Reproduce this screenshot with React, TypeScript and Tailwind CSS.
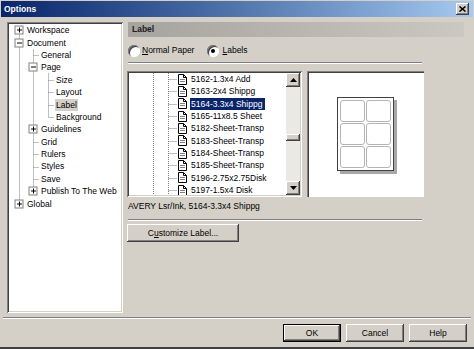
import React from "react";

const font = { fontFamily: '"Liberation Sans", Arial, sans-serif' };

interface TreeItem {
  label: string;
  level: number;
  exp?: "+" | "-";
  selected?: boolean;
}

const tree: TreeItem[] = [
  { label: "Workspace", level: 0, exp: "+" },
  { label: "Document", level: 0, exp: "-" },
  { label: "General", level: 1 },
  { label: "Page", level: 1, exp: "-" },
  { label: "Size", level: 2 },
  { label: "Layout", level: 2 },
  { label: "Label", level: 2, selected: true },
  { label: "Background", level: 2 },
  { label: "Guidelines", level: 1, exp: "+" },
  { label: "Grid", level: 1 },
  { label: "Rulers", level: 1 },
  { label: "Styles", level: 1 },
  { label: "Save", level: 1 },
  { label: "Publish To The Web", level: 1, exp: "+" },
  { label: "Global", level: 0, exp: "+" },
];

const labels = [
  "5162-1.3x4 Add",
  "5163-2x4 Shippg",
  "5164-3.3x4 Shippg",
  "5165-11x8.5 Sheet",
  "5182-Sheet-Transp",
  "5183-Sheet-Transp",
  "5184-Sheet-Transp",
  "5185-Sheet-Transp",
  "5196-2.75x2.75Disk",
  "5197-1.5x4 Disk",
];

const levelPad = ["pl-[18px]", "pl-[32px]", "pl-[47px]"];
const levelX = [10.5, 24.5, 39.5];

const raised =
  "bg-[#d4d0c8] shadow-[inset_-1px_-1px_#404040,inset_1px_1px_#ffffff,inset_-2px_-2px_#808080,inset_2px_2px_#d4d0c8]";
const sunken =
  "shadow-[inset_1px_1px_#808080,inset_-1px_-1px_#ffffff,inset_2px_2px_#404040,inset_-2px_-2px_#d4d0c8]";

const Expander = ({ x, y, sign }: { x: number; y: number; sign: "+" | "-" }) => (
  <g>
    <rect x={x - 4} y={y - 4} width={8} height={8} fill="#fff" stroke="#808080" />
    <line x1={x - 2} y1={y} x2={x + 3} y2={y} stroke="#000" />
    {sign === "+" && <line x1={x + 0.5} y1={y - 2.5} x2={x + 0.5} y2={y + 2.5} stroke="#000" />}
  </g>
);

const TreeLines = () => {
  const c = (i: number) => Math.round(6.2 + 12.4 * i) + 0.5;
  const dash = { stroke: "#808080", strokeDasharray: "1 1" };
  return (
    <svg className="absolute left-0 top-0 pointer-events-none" width={112} height={287}>
      <line x1={10.5} y1={c(0)} x2={10.5} y2={c(14)} {...dash} />
      <line x1={24.5} y1={c(1) + 6} x2={24.5} y2={c(13)} {...dash} />
      <line x1={39.5} y1={c(3) + 6} x2={39.5} y2={c(7)} {...dash} />
      {tree.map((t, i) =>
        t.level > 0 && !t.exp ? (
          <line key={i} x1={levelX[t.level]} y1={c(i)} x2={levelX[t.level] + 6} y2={c(i)} {...dash} />
        ) : null
      )}
      {tree.map((t, i) =>
        t.exp ? <Expander key={"e" + i} x={levelX[t.level] - 0.5} y={c(i) - 0.5} sign={t.exp} /> : null
      )}
    </svg>
  );
};

const ListLines = () => {
  const c = (i: number) => Math.round(6 + 12.33 * i) + 0.5;
  const dash = { stroke: "#808080", strokeDasharray: "1 1" };
  return (
    <svg className="absolute left-0 top-0 pointer-events-none" width={157} height={122}>
      <line x1={24.5} y1={0} x2={24.5} y2={122} {...dash} />
      <line x1={39.5} y1={0} x2={39.5} y2={122} {...dash} />
      {labels.map((_, i) => (
        <line key={i} x1={39.5} y1={c(i)} x2={48} y2={c(i)} {...dash} />
      ))}
    </svg>
  );
};

const PageIcon = () => (
  <svg width="9" height="11" viewBox="0 0 9 11" className="shrink-0">
    <path d="M0.5 0.5 H5.5 L8.5 3.5 V10.5 H0.5 Z" fill="#fff" stroke="#000" />
    <path d="M5.5 0.5 V3.5 H8.5" fill="none" stroke="#000" />
    <line x1="2" y1="5.5" x2="7" y2="5.5" stroke="#808080" />
    <line x1="2" y1="7.5" x2="7" y2="7.5" stroke="#808080" />
  </svg>
);

const Arrow = ({ up }: { up?: boolean }) => (
  <svg width="7" height="4" viewBox="0 0 7 4">
    <path d={up ? "M0 4 L3.5 0 L7 4 Z" : "M0 0 L3.5 4 L7 0 Z"} fill="#000" />
  </svg>
);

const Radio = ({ checked }: { checked?: boolean }) => (
  <span className="w-[12px] h-[12px] rounded-full bg-white flex items-center justify-center shrink-0 shadow-[inset_1px_1px_#808080,inset_-1px_-1px_#ffffff,inset_2px_2px_#404040]">
    {checked && <span className="w-[4px] h-[4px] rounded-full bg-black" />}
  </span>
);

const Button = ({ children, def }: { children: React.ReactNode; def?: boolean }) => (
  <div className={def ? "border border-black" : ""}>
    <div
      className={
        raised +
        " flex items-center justify-center text-[8.5px] text-black " +
        (def ? "w-[56px] h-[16px]" : "w-[58px] h-[18px]")
      }
    >
      {children}
    </div>
  </div>
);

const Separator = ({ w }: { w: string }) => (
  <div className={w + " h-[2px] border-t border-t-[#808080] border-b border-b-white"} />
);

export default function App() {
  return (
    <div
      className="relative w-[474px] h-[349px] bg-[#d4d0c8] border-b-[2px] border-b-[#404040] overflow-hidden text-black"
      style={font}
    >
      {/* Title bar */}
      <div className="mx-[1px] mt-[1px] h-[16px] flex items-center justify-between bg-gradient-to-r from-[#0a246a] to-[#a6caf0] pl-[3px] pr-[4px]">
        <span className="text-white font-bold text-[8.5px] leading-none">Options</span>
        <div className={raised + " w-[13px] h-[12px] flex items-center justify-center"}>
          <svg width="7" height="6" viewBox="0 0 7 6">
            <path d="M0.5 0.5 L6.5 5.5 M6.5 0.5 L0.5 5.5" stroke="#000" strokeWidth="1.6" />
          </svg>
        </div>
      </div>

      {/* Body */}
      <div className="flex pl-[7px] pt-[5px] gap-[5px]">
        {/* Tree */}
        <div className={"w-[116px] h-[291px] bg-white p-[2px] " + sunken}>
          <div className="relative w-full h-full">
            <TreeLines />
            <div className="relative">
              {tree.map((t) => (
                <div key={t.label} className={"h-[12.4px] flex items-center text-[8.5px] " + levelPad[t.level]}>
                  <span
                    className={
                      "leading-[12px] whitespace-nowrap " + (t.selected ? "bg-[#d4d0c8] px-[1px] -ml-[1px]" : "")
                    }
                  >
                    {t.label}
                  </span>
                </div>
              ))}
            </div>
          </div>
        </div>

        {/* Right panel */}
        <div className="w-[336px] flex flex-col">
          <div className="h-[15px] bg-gradient-to-r from-[#a6a49e] to-[#cbc8c1] flex items-center pl-[4px]">
            <span className="text-[8.5px] font-bold text-[#202020]">Label</span>
          </div>

          <div className="mt-[7px] h-[13px] flex items-center text-[8.5px]">
            <Radio />
            <span className="ml-[2px]">
              <span className="underline">N</span>ormal Paper
            </span>
            <span className="ml-[13px] flex items-center">
              <Radio checked />
              <span className="ml-[3px]">
                <span className="underline">L</span>abels
              </span>
            </span>
          </div>

          <div className="mt-[5px]">
            <Separator w="w-[294px]" />
          </div>

          <div className="mt-[7px] flex gap-[5px] -ml-[1px]">
            {/* Label list */}
            <div className={"w-[175px] h-[126px] bg-white p-[2px] flex " + sunken}>
              <div className="relative flex-1 overflow-hidden">
                <ListLines />
                <div className="relative">
                  {labels.map((l, i) => (
                    <div key={l} className="h-[12.33px] flex items-center pl-[49px] gap-[4px] text-[8.5px]">
                      <PageIcon />
                      <span
                        className={
                          "leading-[12px] whitespace-nowrap -ml-[1px] px-[1px] " +
                          (i === 2 ? "bg-[#0a246a] text-white pr-[3px]" : "")
                        }
                      >
                        {l}
                      </span>
                    </div>
                  ))}
                </div>
              </div>
              <div className="w-[14px] h-full flex flex-col bg-[#ebe9e4]">
                <div className={raised + " h-[14px] flex items-center justify-center"}>
                  <Arrow up />
                </div>
                <div className={raised + " mt-[47px] h-[7px]"} />
                <div className="flex-1" />
                <div className={raised + " h-[14px] flex items-center justify-center"}>
                  <Arrow />
                </div>
              </div>
            </div>

            {/* Preview */}
            <div className="w-[117px] h-[126px] bg-white flex items-center justify-center shadow-[inset_1px_1px_#808080,inset_2px_2px_#404040,inset_-1px_-1px_#ffffff]">
              <div className="w-[57px] h-[74px] bg-white border border-[#404040] shadow-[3px_3px_0_#a8a8a8] grid grid-cols-2 grid-rows-3 gap-[1px] p-[2px]">
                {Array.from({ length: 6 }).map((_, i) => (
                  <div key={i} className="rounded-[3px] border border-[#b4b4b4]" />
                ))}
              </div>
            </div>
          </div>

          <div className="mt-[3px] h-[13px] flex items-center text-[8.5px] whitespace-nowrap">
            AVERY Lsr/Ink, 5164-3.3x4 Shippg
          </div>

          <div className="mt-[6px]">
            <Separator w="w-[294px]" />
          </div>

          <div className="mt-[3px] -ml-[1px]">
            <div className={raised + " w-[112px] h-[18px] flex items-center justify-center text-[8.5px]"}>
              <span>
                C<span className="underline">u</span>stomize Label...
              </span>
            </div>
          </div>
        </div>
      </div>

      {/* Bottom separator */}
      <div className="mt-[4px] mx-[3px]">
        <Separator w="w-full" />
      </div>

      {/* Buttons */}
      <div className="mt-[5px] flex justify-end gap-[5px] pr-[7px]">
        <Button def>OK</Button>
        <Button>Cancel</Button>
        <Button>Help</Button>
      </div>
    </div>
  );
}
